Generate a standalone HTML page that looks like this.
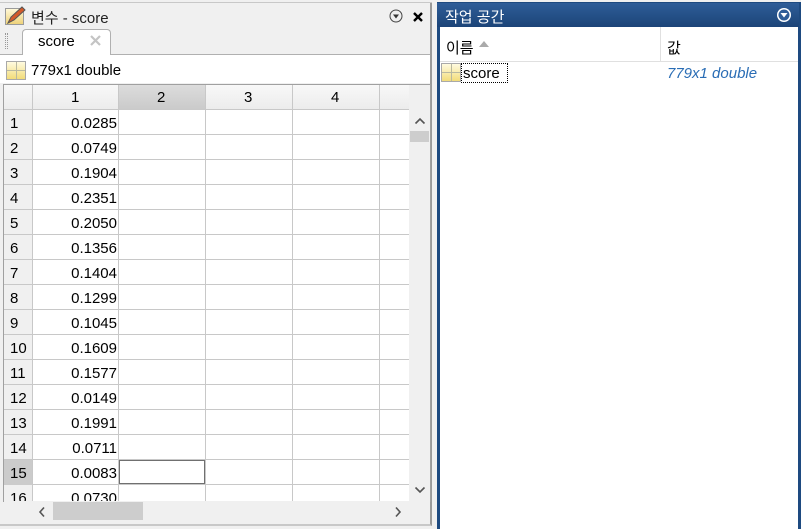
<!DOCTYPE html>
<html><head><meta charset="utf-8"><style>
*{margin:0;padding:0;box-sizing:border-box}
body{width:801px;height:529px;background:#f0f0f0;font-family:"Liberation Sans","Noto Sans CJK KR",sans-serif;font-size:14px;position:relative;overflow:hidden;color:#000}
.abs{position:absolute}
.icon{position:absolute;width:20px;height:19px;border:1px solid #a9a9a9;background:linear-gradient(#fffbe0,#f2dc7a)}
.icon:before{content:"";position:absolute;left:9px;top:0;width:1px;height:100%;background:#b9b9a0}
.icon:after{content:"";position:absolute;top:8px;left:0;height:1px;width:100%;background:#b9b9a0}
</style></head><body>
<div class="abs" style="left:0;top:2px;width:432px;height:524px;background:#f0f0f0;border-right:2px solid #9a9a9a;border-bottom:2px solid #c8c8c8"></div>
<div class="abs" style="left:0;top:2px;width:432px;height:1px;background:#c8c8c8"></div>
<div class="abs" style="left:5px;top:8px;width:19px;height:17px;background:linear-gradient(#fff8d8,#eed27a);border:1px solid #9a9a9a"></div>
<svg class="abs" style="left:5px;top:5px" width="22" height="20"><path d="M3 18 L6 12 L17 2 L20 5 L9 15 Z" fill="#d35a2a" stroke="#555" stroke-width="1"/></svg>
<div class="abs" style="left:31px;top:7px;font-size:15px;color:#222">변수 - score</div>
<svg class="abs" style="left:389px;top:9px" width="14" height="14"><circle cx="7" cy="7" r="6" fill="#eee" stroke="#444"/><path d="M4 5.5 L10 5.5 L7 9.5Z" fill="#333"/></svg>
<svg class="abs" style="left:412px;top:11px" width="12" height="12"><path d="M2 2 L10 10 M10 2 L2 10" stroke="#000" stroke-width="2.4"/></svg>
<div class="abs" style="left:5px;top:33px;width:3px;height:16px;border-left:1px dotted #999;border-right:1px dotted #999"></div>
<div class="abs" style="left:22px;top:29px;width:89px;height:26px;background:#fff;border:1px solid #b0b0b0;border-bottom:none;border-radius:4px 4px 0 0"></div>
<div class="abs" style="left:38px;top:33px;font-size:15px">score</div>
<svg class="abs" style="left:90px;top:35px" width="11" height="11"><path d="M1 1 L10 10 M10 1 L1 10" stroke="#c4c4c4" stroke-width="2.2"/></svg>
<div class="abs" style="left:0;top:54px;width:22px;height:1px;background:#b0b0b0"></div>
<div class="abs" style="left:111px;top:54px;width:319px;height:1px;background:#b0b0b0"></div>
<div class="abs" style="left:0;top:55px;width:430px;height:28px;background:#fff"></div>
<div class="icon" style="left:6px;top:61px"></div>
<div class="abs" style="left:31px;top:62px;font-size:15px">779x1 double</div>
<div class="abs" style="left:3px;top:84px;width:428px;height:418px;background:#fff;border:1px solid #a0a0a0"></div>
<div class="abs" style="left:4px;top:85px;width:405px;height:25px;background:linear-gradient(#f8f8f8,#ececec);border-bottom:1px solid #c8c8c8"></div>
<div class="abs" style="left:118px;top:85px;width:87px;height:25px;background:linear-gradient(#dcdcdc,#cacaca)"></div>
<div class="abs" style="left:32px;top:85px;width:1px;height:416px;background:#c8c8c8"></div>
<div class="abs" style="left:118px;top:85px;width:1px;height:416px;background:#c8c8c8"></div>
<div class="abs" style="left:205px;top:85px;width:1px;height:416px;background:#c8c8c8"></div>
<div class="abs" style="left:292px;top:85px;width:1px;height:416px;background:#c8c8c8"></div>
<div class="abs" style="left:379px;top:85px;width:1px;height:416px;background:#c8c8c8"></div>
<div class="abs" style="left:71px;top:89px;font-size:15px">1</div>
<div class="abs" style="left:157px;top:89px;font-size:15px">2</div>
<div class="abs" style="left:244px;top:89px;font-size:15px">3</div>
<div class="abs" style="left:331px;top:89px;font-size:15px">4</div>
<div id="rows"></div>
<div class="abs" style="left:4px;top:460px;width:28px;height:25px;background:#cbcbcb"></div>
<div class="abs" style="left:119px;top:460px;width:86px;height:24px;border:1px solid #707070"></div>
<div class="abs" style="left:10px;top:465px;font-size:15px">15</div>
<script>
var v=["0.0285","0.0749","0.1904","0.2351","0.2050","0.1356","0.1404","0.1299","0.1045","0.1609","0.1577","0.0149","0.1991","0.0711","0.0083","0.0730"];
var h="";
for(var i=0;i<16;i++){var y=110+i*25;
h+='<div class="abs" style="left:4px;top:'+(y+24)+'px;width:405px;height:1px;background:#c8c8c8"></div>';
h+='<div class="abs" style="left:4px;top:'+y+'px;width:28px;height:24px;background:#f0f0f0"></div>';
if(i!=14)h+='<div class="abs" style="left:10px;top:'+(y+5)+'px;font-size:15px">'+(i+1)+'</div>';
h+='<div class="abs" style="left:33px;top:'+(y+5)+'px;width:84px;text-align:right;font-size:15px">'+v[i]+'</div>';}
document.getElementById('rows').innerHTML=h;
</script>
<div class="abs" style="left:4px;top:501px;width:426px;height:20px;background:#f0f0f0"></div>
<div class="abs" style="left:409px;top:85px;width:21px;height:416px;background:#f0f0f0"></div>
<div class="abs" style="left:410px;top:131px;width:19px;height:11px;background:#cdcdcd"></div>
<svg class="abs" style="left:414px;top:117px" width="12" height="8"><path d="M1.5 6.5 L6 2 L10.5 6.5" fill="none" stroke="#555" stroke-width="1.6"/></svg>
<svg class="abs" style="left:414px;top:486px" width="12" height="8"><path d="M1.5 1.5 L6 6 L10.5 1.5" fill="none" stroke="#555" stroke-width="1.6"/></svg>
<div class="abs" style="left:53px;top:502px;width:90px;height:18px;background:#cdcdcd"></div>
<svg class="abs" style="left:38px;top:506px" width="8" height="12"><path d="M6 1.5 L2 6 L6 10.5" fill="none" stroke="#555" stroke-width="1.6"/></svg>
<svg class="abs" style="left:394px;top:506px" width="8" height="12"><path d="M2 1.5 L6 6 L2 10.5" fill="none" stroke="#555" stroke-width="1.6"/></svg>
<div class="abs" style="left:437px;top:2px;width:364px;height:527px;background:#1e4a80"></div>
<div class="abs" style="left:437px;top:3px;width:362px;height:24px;background:linear-gradient(#2e5d98,#1c4478)"></div>
<div class="abs" style="left:445px;top:6px;font-size:15px;color:#fff">작업 공간</div>
<svg class="abs" style="left:776px;top:7px" width="16" height="16"><circle cx="8" cy="8" r="7" fill="#fff"/><circle cx="8" cy="8" r="5.5" fill="#2e5d98"/><path d="M4.5 6 L11.5 6 L8 10.5Z" fill="#fff"/></svg>
<div class="abs" style="left:440px;top:27px;width:358px;height:502px;background:#fff"></div>
<div class="abs" style="left:440px;top:61px;width:358px;height:1px;background:#e0e0e0"></div>
<div class="abs" style="left:660px;top:27px;width:1px;height:35px;background:#e0e0e0"></div>
<div class="abs" style="left:446px;top:37px;font-size:15px">이름</div>
<div class="abs" style="left:479px;top:41px;width:0;height:0;border-left:5px solid transparent;border-right:5px solid transparent;border-bottom:6px solid #aaa"></div>
<div class="abs" style="left:667px;top:37px;font-size:15px">값</div>
<div class="icon" style="left:441px;top:63px"></div>
<div class="abs" style="left:461px;top:63px;width:47px;height:20px;border:1px dotted #000"></div>
<div class="abs" style="left:463px;top:65px;font-size:15px">score</div>
<div class="abs" style="left:667px;top:65px;font-size:15px;font-style:italic;color:#2a6db5">779x1 double</div>
</body></html>
